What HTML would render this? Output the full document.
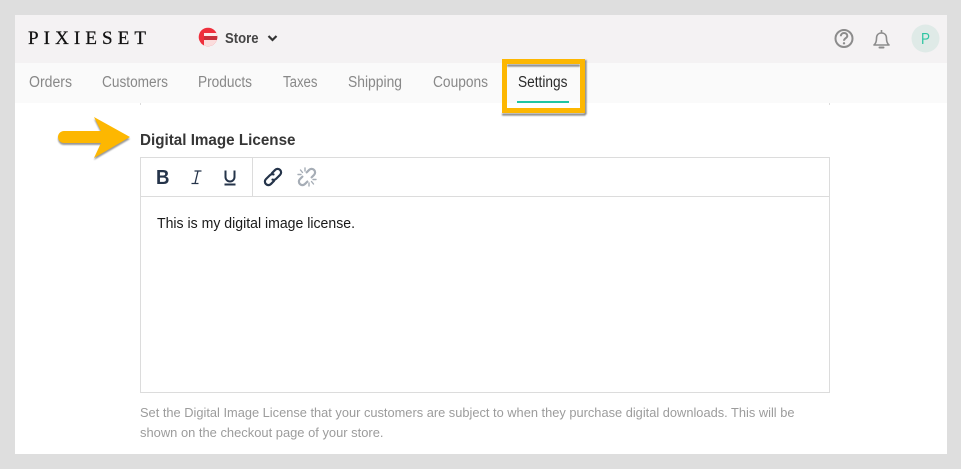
<!DOCTYPE html>
<html><head><meta charset="utf-8"><style>
html,body{margin:0;padding:0;width:961px;height:469px;overflow:hidden;background:#dedede}
svg{display:block}
text{font-family:"Liberation Sans",sans-serif}
</style></head><body>
<svg width="961" height="469" viewBox="0 0 961 469" xmlns="http://www.w3.org/2000/svg">
<defs>
<filter id="s" x="-20%" y="-20%" width="140%" height="150%"><feGaussianBlur stdDeviation="0.9"/></filter>
<clipPath id="c"><circle cx="208" cy="37" r="9.3"/></clipPath>
</defs>
<rect width="961" height="469" fill="#dedede"/>
<rect x="15" y="15" width="932" height="439" fill="#fff"/>
<rect x="15" y="15" width="932" height="48" fill="#f4f2f3"/>
<rect x="15" y="63" width="932" height="40" fill="#fafafa"/>
<rect x="140" y="103" width="1" height="2" fill="#ddd"/>
<rect x="829" y="103" width="1" height="2" fill="#ddd"/>

<text x="28" y="44" style="font-family:'Liberation Serif',serif" font-size="19" fill="#111" stroke="#111" stroke-width=".25" textLength="118">PIXIESET</text>

<g clip-path="url(#c)">
<rect x="198" y="27" width="20" height="20" fill="#ef2f3c"/>
<rect x="204" y="40" width="14" height="7" fill="#fbdcdc"/>
<rect x="204" y="33" width="14" height="3" fill="#fdeaea"/>
<rect x="204" y="36" width="14" height="4" fill="#c9303b"/>
</g>
<text x="225" y="43" font-size="14.500" font-weight="700" fill="#444" textLength="33.500" lengthAdjust="spacingAndGlyphs">Store</text>
<path d="M268.500 36l4 4 4-4" fill="none" stroke="#333" stroke-width="2.200"/>

<circle cx="844" cy="38.500" r="8.500" fill="none" stroke="#8c8c8c" stroke-width="2"/>
<path d="M840.800 36.200c0-4.200 6.500-4.200 6.500-.3 0 2.400-3.300 2.300-3.300 4.800" fill="none" stroke="#8c8c8c" stroke-width="2"/>
<circle cx="844" cy="43.300" r="1.200" fill="#8c8c8c"/>
<path d="M874 45c1.800-1.500 2.500-3 2.500-6.500 0-3.500 2-5.500 5-5.500s5 2 5 5.500c0 3.500.7 5 2.500 6.500z" fill="none" stroke="#8c8c8c" stroke-width="1.600" stroke-linejoin="round"/>
<path d="M881.500 30v3" stroke="#8c8c8c" stroke-width="1.600"/>
<path d="M879.500 47.500h4" stroke="#8c8c8c" stroke-width="2" stroke-linecap="round"/>
<circle cx="925.500" cy="38.500" r="14" fill="#dfeae7"/>
<text x="921" y="44" font-size="15.500" fill="#2ec5a2" textLength="9" lengthAdjust="spacingAndGlyphs">P</text>

<g font-size="15.500" fill="#888">
<text x="29" y="87" textLength="43" lengthAdjust="spacingAndGlyphs">Orders</text>
<text x="102" y="87" textLength="66" lengthAdjust="spacingAndGlyphs">Customers</text>
<text x="198" y="87" textLength="54" lengthAdjust="spacingAndGlyphs">Products</text>
<text x="283" y="87" textLength="34.500" lengthAdjust="spacingAndGlyphs">Taxes</text>
<text x="348" y="87" textLength="54" lengthAdjust="spacingAndGlyphs">Shipping</text>
<text x="433" y="87" textLength="55" lengthAdjust="spacingAndGlyphs">Coupons</text>
</g>
<text x="518" y="87" font-size="15.500" fill="#2b2b2b" textLength="49.500" lengthAdjust="spacingAndGlyphs">Settings</text>
<rect x="517" y="101" width="52" height="2" fill="#1fc5a3"/>

<path d="M507 65.500H580M502 114.500H585.500M585.500 60V114.500" fill="none" stroke="#555" stroke-opacity=".7" stroke-width="2.200" filter="url(#s)"/>
<rect x="504.500" y="61.500" width="78" height="49" fill="none" stroke="#fdb701" stroke-width="5"/>

<path d="M64 131H101L94 117L130 137L94 158L101 143H64a6 6 0 0 1 0-12z" fill="#555" opacity=".6" transform="translate(0 2)" filter="url(#s)"/>
<path d="M64 131H101L94 117L130 137L94 158L101 143H64a6 6 0 0 1 0-12z" fill="#fdb701"/>

<text x="140" y="145" font-size="15.500" font-weight="700" fill="#363636" textLength="155.500" lengthAdjust="spacingAndGlyphs">Digital Image License</text>

<rect x="140.500" y="157.500" width="689" height="235" fill="#fff" stroke="#dcdcdc"/>
<path d="M140.500 196.500H829.500M252.500 157.500V196.500" stroke="#dcdcdc" fill="none"/>

<text x="156" y="184" font-size="20" font-weight="700" fill="#25344a" textLength="13.500" lengthAdjust="spacingAndGlyphs">B</text>
<path d="M194.500 171h7M191.500 183.500h7M198 171l-3 12.500" fill="none" stroke="#25344a" stroke-width="1.300"/>
<path d="M225.500 170.500v6.500a4.500 4.500 0 0 0 9 0v-6.500" fill="none" stroke="#25344a" stroke-width="2"/>
<path d="M224.500 184.500h11" stroke="#25344a" stroke-width="2"/>

<g transform="rotate(-45 273 177)" fill="none" stroke="#25344a" stroke-width="2.200" stroke-linecap="round">
<g transform="translate(273 177)">
<path d="M-2 3.500H-6.500a3.500 3.500 0 0 1 0-7H-1a3.500 3.500 0 0 1 3.200 2"/>
<path d="M2 -3.500H6.500a3.500 3.500 0 0 1 0 7H1a3.500 3.500 0 0 1-3.200-2"/>
</g>
</g>
<g transform="rotate(-45 307 177)" fill="none" stroke="#a6adb6" stroke-width="2.200" stroke-linecap="round">
<g transform="translate(307 177)">
<path d="M-3 3.500H-6.500a3.500 3.500 0 0 1 0-7H-3"/>
<path d="M3 -3.500H6.500a3.500 3.500 0 0 1 0 7H3"/>
</g>
</g>
<path d="M300.500 170l2 2.500M305 168v3M298 174.500h3M313.500 184l-2-2.500M309 186v-3M316 179.500h-3" fill="none" stroke="#a6adb6" stroke-width="1.400" stroke-linecap="round"/>

<text x="157" y="228" font-size="15" fill="#1a1a1a" textLength="198" lengthAdjust="spacingAndGlyphs">This is my digital image license.</text>

<g font-size="13" fill="#9c9c9c">
<text x="140" y="417" textLength="654.500" lengthAdjust="spacingAndGlyphs">Set the Digital Image License that your customers are subject to when they purchase digital downloads. This will be</text>
<text x="140" y="437" textLength="243.500" lengthAdjust="spacingAndGlyphs">shown on the checkout page of your store.</text>
</g>
</svg>
</body></html>
